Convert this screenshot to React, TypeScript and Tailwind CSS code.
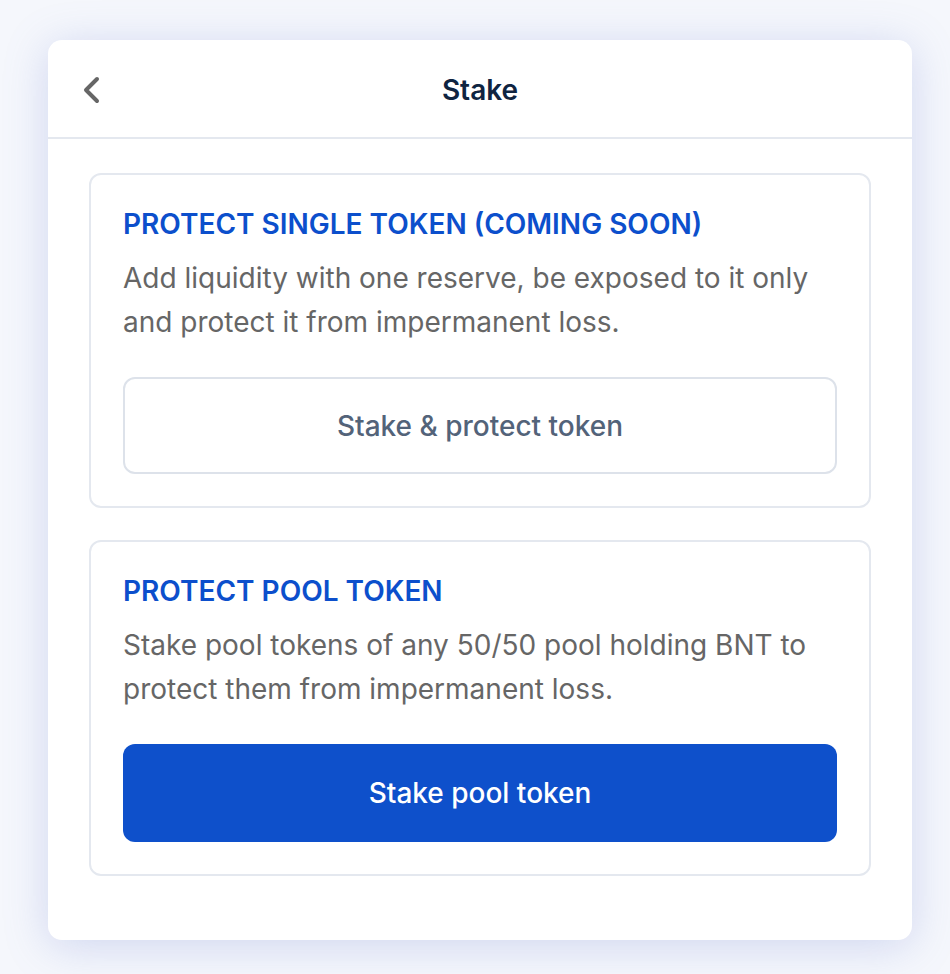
import React from 'react'

const OptionCard = ({
  title,
  text,
  button,
  primary,
}: {
  title: string
  text: React.ReactNode
  button: string
  primary?: boolean
}) => {
  return (
    <div className="rounded-[12px] border-2 border-[#e4e8ef] px-[32px] pt-[33px] pb-[32px]">
      <h2 className="text-[28px] leading-[32px] font-semibold text-[#0c4fcc]">{title}</h2>
      <p className="mt-[16px] text-[28px] leading-[44px] text-[#666666]">{text}</p>
      {primary ? (
        <button className="mt-[33px] w-full h-[98px] rounded-[12px] bg-[#0e50cb] text-white text-[28px] font-medium">
          {button}
        </button>
      ) : (
        <button className="mt-[33px] w-full h-[97px] rounded-[12px] border-2 border-[#dde2ea] bg-white text-[#536379] text-[28px] font-medium">
          {button}
        </button>
      )}
    </div>
  )
}

const App = () => {
  return (
    <div
      className="min-h-[974px] w-full bg-[#f5f7fc] pt-[40px] pl-[48px] pr-[38px]"
      style={{ fontFamily: 'Inter, "Noto Sans", sans-serif' }}
    >
      <div className="h-[900px] rounded-[14px] bg-white shadow-[0_6px_44px_rgba(110,130,210,0.28)] flex flex-col">
        <div className="relative h-[99px] pt-[3px] border-b-2 border-[#e4e8ef] flex items-center justify-center">
          <button className="absolute left-[32px] top-[36px] p-0">
            <svg width="22" height="28" viewBox="0 0 22 28" fill="none">
              <path d="M17 3L6 14L17 25" stroke="#666666" strokeWidth="4" strokeLinecap="round" strokeLinejoin="round" />
            </svg>
          </button>
          <h1 className="text-[28px] font-semibold text-[#0f2441]">Stake</h1>
        </div>
        <div className="px-[41px] pt-[34px] flex flex-col gap-[32px]">
          <OptionCard
            title="PROTECT SINGLE TOKEN (COMING SOON)"
            text={
              <>
                Add liquidity with one reserve, be exposed to it only
                <br />
                and protect it from impermanent loss.
              </>
            }
            button="Stake & protect token"
          />
          <OptionCard
            title="PROTECT POOL TOKEN"
            text={
              <>
                Stake pool tokens of any 50/50 pool holding BNT to
                <br />
                protect them from impermanent loss.
              </>
            }
            button="Stake pool token"
            primary
          />
        </div>
      </div>
    </div>
  )
}

export default App
